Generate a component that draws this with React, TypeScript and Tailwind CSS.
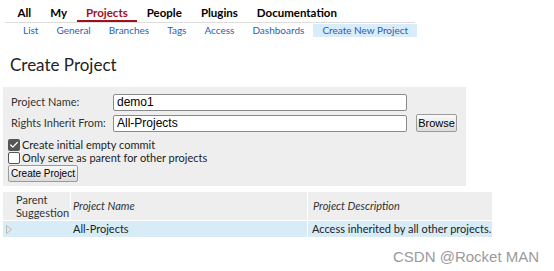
import { Check } from 'lucide-react';

const topLinks = ['All', 'My', 'Projects', 'People', 'Plugins', 'Documentation'];
const subLinks = ['List', 'General', 'Branches', 'Tags', 'Access', 'Dashboards', 'Create New Project'];

export default function App() {
    return (
        <div className="w-[554px] h-[271px] bg-white overflow-hidden whitespace-nowrap font-['Lato',sans-serif] text-[#222]">
            {/* top menu */}
            <div className="flex pl-[8px] pt-[5px] h-[22px]">
                {topLinks.map((l) => (
                    <div
                        key={l}
                        className={
                            'px-[9.5px] text-[11.5px] font-bold leading-[15px] h-[17px] ' +
                            (l === 'Projects' ? 'text-[#a0101a] border-b-2 border-[#a0101a]' : 'text-black')
                        }
                    >
                        {l}
                    </div>
                ))}
            </div>
            <div className="ml-[5px] w-[410px] border-t border-[#dddddd]" />
            <div className="flex pl-[14px] pt-[1px] h-[14px]">
                {subLinks.map((l) => (
                    <div
                        key={l}
                        className={
                            'px-[9px] text-[10px] leading-[13px] text-[#2a5fb0] ' +
                            (l === 'Create New Project' ? 'bg-[#d9ecf9]' : '')
                        }
                    >
                        {l}
                    </div>
                ))}
            </div>

            <h1 className="ml-[10px] mt-[16px] text-[17px] leading-[24px] text-[#222]">Create Project</h1>

            {/* form panel */}
            <div className="ml-[3px] mt-[10px] w-[463px] h-[99px] bg-[#eeeeee] pt-[6px] pl-[5px]">
                <div className="flex items-center h-[18px]">
                    <span className="w-[105px] shrink-0 pl-[3px] text-[11px] text-[#333]">Project Name:</span>
                    <div className="w-[294px] h-[17px] bg-white border border-[#8a8a8a] rounded-[2px] px-[3px] text-[12px] leading-[15px] font-['Liberation_Sans',sans-serif] text-black">
                        demo1
                    </div>
                </div>
                <div className="flex items-center h-[18px] mt-[3px]">
                    <span className="w-[105px] shrink-0 pl-[3px] text-[11px] text-[#333]">Rights Inherit From:</span>
                    <div className="w-[294px] h-[17px] bg-white border border-[#8a8a8a] rounded-[2px] px-[3px] text-[12px] leading-[15px] font-['Liberation_Sans',sans-serif] text-black">
                        All-Projects
                    </div>
                    <div className="ml-[9px] w-[41px] h-[18px] border border-[#9a9a9a] rounded-[2px] bg-gradient-to-b from-[#fafafa] to-[#dcdcdc] text-[11px] leading-[16px] text-center font-['Liberation_Sans',sans-serif] text-black">
                        Browse
                    </div>
                </div>
                <div className="flex items-center h-[13px] mt-[6px]">
                    <div className="w-[12px] h-[12px] bg-[#555] rounded-[2px] flex items-center justify-center">
                        <Check size={10} strokeWidth={3} className="text-white" />
                    </div>
                    <span className="ml-[2px] text-[11px] leading-[13px] text-[#222]">Create initial empty commit</span>
                </div>
                <div className="flex items-center h-[13px]">
                    <div className="w-[12px] h-[12px] bg-white border border-[#555] rounded-[2px]" />
                    <span className="ml-[2px] text-[11px] leading-[13px] text-[#222]">Only serve as parent for other projects</span>
                </div>
                <div className="mt-[1px] w-[70px] h-[17px] border border-[#9a9a9a] rounded-[2px] bg-gradient-to-b from-[#fafafa] to-[#dcdcdc] text-[10px] leading-[15px] text-center font-['Liberation_Sans',sans-serif] text-black">
                    Create Project
                </div>
            </div>

            {/* suggestion table */}
            <div className="ml-[3px] mt-[6px] w-[489px] text-[11px]">
                <div className="flex h-[28px] bg-[#eeeeee]">
                    <div className="w-[67px] shrink-0 pl-[13px] leading-[13px] pt-[1px] text-[#333]">
                        Parent
                        <br />
                        Suggestion
                    </div>
                    <div className="w-[237px] shrink-0 border-l border-white flex items-center pl-[2px] italic text-[#333]">Project Name</div>
                    <div className="flex-1 border-l border-white flex items-center pl-[5px] italic text-[#333]">Project Description</div>
                </div>
                <div className="flex h-[17px] bg-[#d8ecf8] border-t border-white">
                    <div className="w-[67px] shrink-0 flex items-center pl-[3px]">
                        <svg width="6" height="9" viewBox="0 0 6 9">
                            <path d="M0.5 0.5 L5.5 4.5 L0.5 8.5 Z" fill="#e8e8e8" stroke="#b8b8b8" />
                        </svg>
                    </div>
                    <div className="w-[237px] shrink-0 border-l border-[#d8ecf8] flex items-center pl-[2px] text-[#222]">All-Projects</div>
                    <div className="flex-1 border-l border-white flex items-center pl-[4px] text-[#222]">Access inherited by all other projects.</div>
                </div>
            </div>

            <div className="ml-[393px] mt-[12px] text-[15px] leading-[16px] text-[#9a9a9a] font-['Liberation_Sans',sans-serif]">
                CSDN @Rocket MAN
            </div>
        </div>
    );
}
